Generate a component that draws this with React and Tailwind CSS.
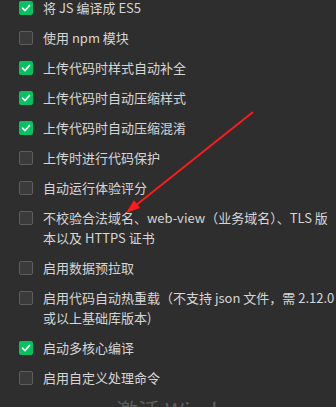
import clsx from 'clsx'

const OPTIONS = [
  { lines: ['将 JS 编译成 ES5'], on: true },
  { lines: ['使用 npm 模块'], on: false },
  { lines: ['上传代码时样式自动补全'], on: true },
  { lines: ['上传代码时自动压缩样式'], on: true },
  { lines: ['上传代码时自动压缩混淆'], on: true },
  { lines: ['上传时进行代码保护'], on: false },
  { lines: ['自动运行体验评分'], on: false },
  { lines: ['不校验合法域名、web-view（业务域名）、TLS 版', '本以及 HTTPS 证书'], on: false },
  { lines: ['启用数据预拉取'], on: false },
  { lines: ['启用代码自动热重载（不支持 json 文件，需 2.12.0', '或以上基础库版本)'], on: false },
  { lines: ['启动多核心编译'], on: true },
  { lines: ['启用自定义处理命令'], on: false },
]

function Box({ on }) {
  return (
    <span
      className={clsx(
        'mt-[3px] w-[14px] h-[14px] shrink-0 rounded-[2px] flex items-center justify-center',
        on ? 'bg-[#07c160]' : 'bg-[#3b3b3b] border border-[#5e5e5e]',
      )}
    >
      {on && (
        <svg width="10" height="10" viewBox="0 0 10 10" fill="none">
          <polyline points="1.5 5.2 4 7.6 8.6 2.4" stroke="#fff" strokeWidth="1.6" strokeLinecap="round" strokeLinejoin="round" />
        </svg>
      )}
    </span>
  )
}

export default function App() {
  return (
    <div
      className="relative w-[336px] h-[407px] overflow-hidden bg-[#2e2e2e] text-[#d6d6d6] text-[13px] leading-[20px]"
      style={{ fontFamily: '"Noto Sans CJK SC", "Noto Sans", sans-serif' }}
    >
      <div className="flex flex-col gap-[10px] pl-[19px] pr-[3px] -mt-[2px]">
        {OPTIONS.map(o => (
          <div key={o.lines[0]} className="flex items-start gap-[10px]">
            <Box on={o.on} />
            <span className="whitespace-nowrap">
              {o.lines.map((l, i) => (
                <span key={i} className="block">{l}</span>
              ))}
            </span>
          </div>
        ))}
      </div>

      {/* red annotation arrow */}
      <svg className="absolute left-0 top-0 pointer-events-none" width="336" height="407">
        <line x1="253" y1="112" x2="135" y2="206" stroke="#ff1a1a" strokeWidth="2" />
        <polygon points="126,213 140,208 134,200" fill="#ff1a1a" />
      </svg>

      {/* windows activation watermark */}
      <div className="absolute left-[116px] top-[396px] text-[22px] leading-[26px] text-[#5c5c5c] whitespace-nowrap">
        激活 Windows
      </div>
    </div>
  )
}
